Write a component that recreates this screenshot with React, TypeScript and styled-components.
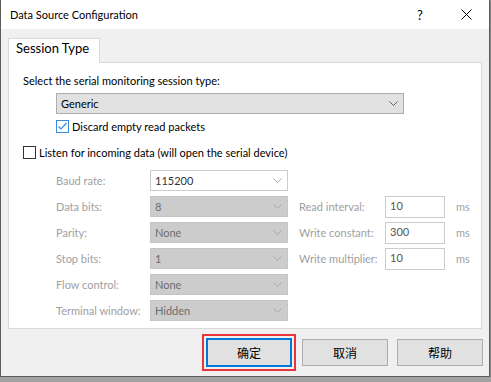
import React from 'react';
import styled, { createGlobalStyle } from 'styled-components';

const GlobalStyle = createGlobalStyle`
  html, body {
    margin: 0;
    padding: 0;
    background: #a3a3a3;
  }

  body {
    font-family: Lato, "Noto Sans", "Noto Sans CJK SC", sans-serif;
    font-size: 11px;
    color: #000;
  }

  * {
    box-sizing: border-box;
  }
`;

const Window = styled.div`
  width: 490px;
  height: 377px;
  display: flex;
  flex-direction: column;
  background: #f0f0f0;
  border: 1px solid #5c5c5c;
  border-top: none;
  box-shadow: 0 1px 3px rgba(0, 0, 0, 0.45);
`;

const TitleBar = styled.div`
  height: 29px;
  flex-shrink: 0;
  display: flex;
  align-items: center;
  background: #fff;
`;

const Title = styled.div`
  flex: 1;
  padding-left: 9px;
  line-height: 16px;
  font-size: 11px;
`;

const TitleButton = styled.div`
  width: 46px;
  height: 29px;
  display: flex;
  align-items: center;
  justify-content: center;
  font-size: 13px;
`;

const Content = styled.div`
  padding: 9px 7px 0;
`;

const TabStrip = styled.div`
  display: flex;
`;

const Tab = styled.div`
  position: relative;
  z-index: 1;
  width: 92px;
  height: 25px;
  margin-bottom: -1px;
  padding-left: 7px;
  line-height: 19px;
  font-size: 13px;
  background: #fff;
  border: 1px solid #d9d9d9;
  border-bottom: none;
`;

const Panel = styled.div`
  height: 267px;
  padding: 10px 0 0 14px;
  background: #fff;
  border: 1px solid #d9d9d9;
`;

const Label = styled.div<{ $disabled?: boolean; $width?: number }>`
  line-height: 16px;
  white-space: nowrap;
  color: ${(p) => (p.$disabled ? '#a0a0a0' : '#000')};
  width: ${(p) => (p.$width ? `${p.$width}px` : 'auto')};
  flex-shrink: 0;
`;

const Indented = styled.div`
  margin-left: 33px;
`;

const SessionSelect = styled.div`
  margin-top: 4px;
  width: 348px;
  height: 21px;
  display: flex;
  align-items: center;
  justify-content: space-between;
  padding: 0 5px 0 4px;
  background: #e1e1e1;
  border: 1px solid #adadad;
  line-height: 16px;
`;

const CheckRow = styled.label<{ $top: number }>`
  margin-top: ${(p) => p.$top}px;
  display: flex;
  align-items: center;
  gap: 3px;
  line-height: 16px;
  height: 13px;
`;

const Box = styled.span<{ $checked?: boolean }>`
  width: 13px;
  height: 13px;
  display: flex;
  align-items: center;
  justify-content: center;
  background: #fff;
  border: 1px solid ${(p) => (p.$checked ? '#3b8ad9' : '#333')};
  flex-shrink: 0;
`;

const Fields = styled.div`
  margin-top: 11px;
  margin-left: 33px;
  display: flex;
  flex-direction: column;
  gap: 5px;
`;

const FieldRow = styled.div`
  height: 21px;
  display: flex;
  align-items: center;
`;

const Combo = styled.div<{ $enabled?: boolean }>`
  width: 138px;
  height: 21px;
  flex-shrink: 0;
  display: flex;
  align-items: center;
  justify-content: space-between;
  padding: 0 5px 0 4px;
  line-height: 16px;
  background: ${(p) => (p.$enabled ? '#fff' : '#cccccc')};
  border: 1px solid ${(p) => (p.$enabled ? '#cccccc' : '#c4c4c4')};
  color: ${(p) => (p.$enabled ? '#333' : '#6d6d6d')};
`;

const SideLabel = styled(Label)`
  margin-left: 11px;
`;

const NumberBox = styled.div`
  width: 60px;
  height: 22px;
  flex-shrink: 0;
  padding: 1px 0 0 4px;
  line-height: 16px;
  background: #fff;
  border: 1px solid #cccccc;
  color: #555;
`;

const Unit = styled.div`
  margin-left: 11px;
  color: #a0a0a0;
  line-height: 16px;
`;

const ButtonRow = styled.div`
  margin-top: 5px;
  margin-right: -1px;
  display: flex;
  justify-content: flex-end;
  align-items: center;
`;

const Highlight = styled.div`
  padding: 2px;
  border: 2px solid #e8343c;
`;

const DialogButton = styled.button<{ $default?: boolean; $gap?: number }>`
  width: 86px;
  height: ${(p) => (p.$default ? 29 : 27)}px;
  margin: 0 0 0 ${(p) => p.$gap ?? 0}px;
  padding: 0;
  font-family: "Noto Sans CJK SC", "Noto Sans", sans-serif;
  font-size: 12px;
  color: #000;
  background: #e1e1e1;
  border: ${(p) => (p.$default ? '2px solid #0078d7' : '1px solid #adadad')};
`;

const Chevron: React.FC<{ color: string }> = ({ color }) => (
  <svg width="9" height="5" viewBox="0 0 9 5">
    <polyline points="0.5,0.5 4.5,4.5 8.5,0.5" fill="none" stroke={color} strokeWidth="1" />
  </svg>
);

const Check: React.FC<{ checked?: boolean }> = ({ checked }) => (
  <Box $checked={checked}>
    {checked && (
      <svg width="11" height="11" viewBox="0 0 11 11">
        <polyline points="1.5,5.5 4,8 9.5,2" fill="none" stroke="#3b8ad9" strokeWidth="1.2" />
      </svg>
    )}
  </Box>
);

const leftFields = [
  { label: 'Baud rate:', value: '115200', enabled: true },
  { label: 'Data bits:', value: '8' },
  { label: 'Parity:', value: 'None' },
  { label: 'Stop bits:', value: '1' },
  { label: 'Flow control:', value: 'None' },
  { label: 'Terminal window:', value: 'Hidden' },
];

const rightFields: Record<number, { label: string; value: string }> = {
  1: { label: 'Read interval:', value: '10' },
  2: { label: 'Write constant:', value: '300' },
  3: { label: 'Write multiplier:', value: '10' },
};

const App: React.FC = () => {
  return (
    <>
      <GlobalStyle />
      <Window>
        <TitleBar>
          <Title>Data Source Configuration</Title>
          <TitleButton>?</TitleButton>
          <TitleButton>
            <svg width="11" height="11" viewBox="0 0 11 11">
              <path d="M0.5 0.5 L10.5 10.5 M10.5 0.5 L0.5 10.5" stroke="#000" strokeWidth="1" />
            </svg>
          </TitleButton>
        </TitleBar>
        <Content>
          <TabStrip>
            <Tab>Session Type</Tab>
          </TabStrip>
          <Panel>
            <Label>Select the serial monitoring session type:</Label>
            <Indented>
              <SessionSelect>
                <span>Generic</span>
                <Chevron color="#606060" />
              </SessionSelect>
              <CheckRow $top={6}>
                <Check checked />
                <span>Discard empty read packets</span>
              </CheckRow>
            </Indented>
            <CheckRow $top={13}>
              <Check />
              <span>Listen for incoming data (will open the serial device)</span>
            </CheckRow>
            <Fields>
              {leftFields.map((f, i) => (
                <FieldRow key={f.label}>
                  <Label $disabled $width={94}>
                    {f.label}
                  </Label>
                  <Combo $enabled={f.enabled}>
                    <span>{f.value}</span>
                    <Chevron color="#a8a8a8" />
                  </Combo>
                  {rightFields[i] && (
                    <>
                      <SideLabel $disabled $width={86}>
                        {rightFields[i].label}
                      </SideLabel>
                      <NumberBox>{rightFields[i].value}</NumberBox>
                      <Unit>ms</Unit>
                    </>
                  )}
                </FieldRow>
              ))}
            </Fields>
          </Panel>
          <ButtonRow>
            <Highlight>
              <DialogButton $default>确定</DialogButton>
            </Highlight>
            <DialogButton $gap={6}>取消</DialogButton>
            <DialogButton $gap={9}>帮助</DialogButton>
          </ButtonRow>
        </Content>
      </Window>
    </>
  );
};

export default App;
